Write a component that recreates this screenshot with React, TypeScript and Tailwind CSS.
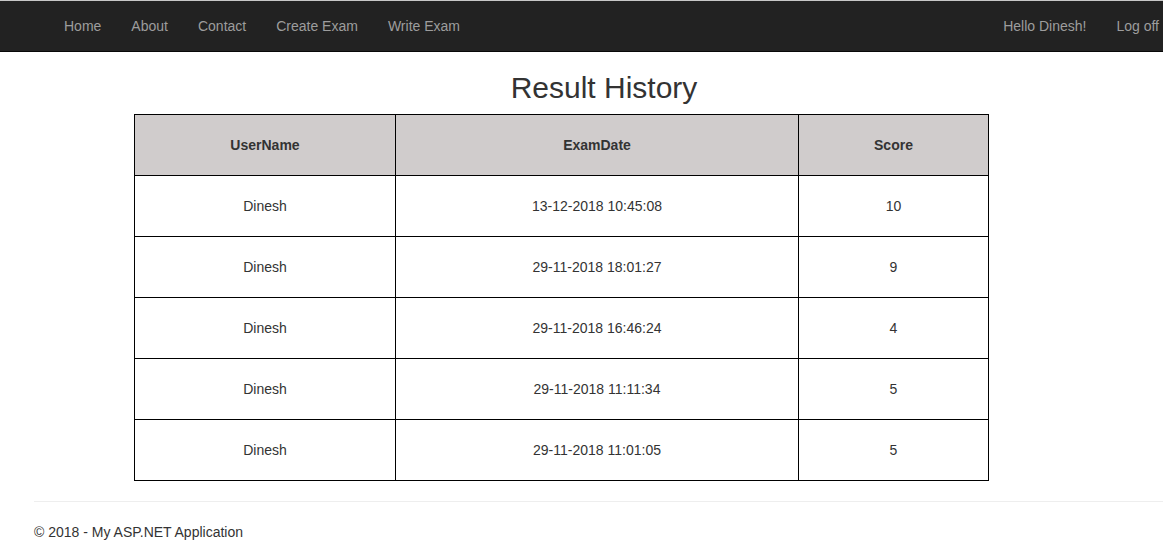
import React from "react";

const rows = [
  ["Dinesh", "13-12-2018 10:45:08", "10"],
  ["Dinesh", "29-11-2018 18:01:27", "9"],
  ["Dinesh", "29-11-2018 16:46:24", "4"],
  ["Dinesh", "29-11-2018 11:11:34", "5"],
  ["Dinesh", "29-11-2018 11:01:05", "5"],
];

export default function App() {
  return (
    <div
      className="w-full min-h-[553px] overflow-hidden bg-white text-[14px] leading-[20px] text-[#333]"
      style={{ fontFamily: '"Liberation Sans", Arial, Helvetica, sans-serif' }}
    >
      <div className="border-t border-[#c8c8c8] bg-[#222] border-b border-b-[#080808]">
        <div className="ml-[34px] w-[1140px] pl-[15px] flex justify-between">
          <ul className="flex">
            {["Home", "About", "Contact", "Create Exam", "Write Exam"].map((l) => (
              <li key={l} className="px-[15px] py-[15px] text-[#9d9d9d]">
                {l}
              </li>
            ))}
          </ul>
          <ul className="flex">
            {["Hello Dinesh!", "Log off"].map((l) => (
              <li key={l} className="px-[15px] py-[15px] text-[#9d9d9d]">
                {l}
              </li>
            ))}
          </ul>
        </div>
      </div>
      <div className="ml-[34px] w-[1140px]">
        <h2 className="mt-[19px] mb-[10px] text-center text-[30px] leading-[33px] font-medium">
          Result History
        </h2>
        <table className="ml-[100px] w-[855px] border-collapse border border-black text-center">
          <thead>
            <tr className="bg-[#d0cccc]">
              <th className="w-[261px] h-[61px] border border-black font-bold">UserName</th>
              <th className="w-[403px] h-[61px] border border-black font-bold">ExamDate</th>
              <th className="h-[61px] border border-black font-bold">Score</th>
            </tr>
          </thead>
          <tbody>
            {rows.map((r, i) => (
              <tr key={i}>
                {r.map((c, j) => (
                  <td key={j} className="h-[61px] border border-black">
                    {c}
                  </td>
                ))}
              </tr>
            ))}
          </tbody>
        </table>
        <hr className="mt-[20px] mb-[20px] border-t border-[#eee] w-[1140px]" />
        <footer>
          <p>© 2018 - My ASP.NET Application</p>
        </footer>
      </div>
    </div>
  );
}
